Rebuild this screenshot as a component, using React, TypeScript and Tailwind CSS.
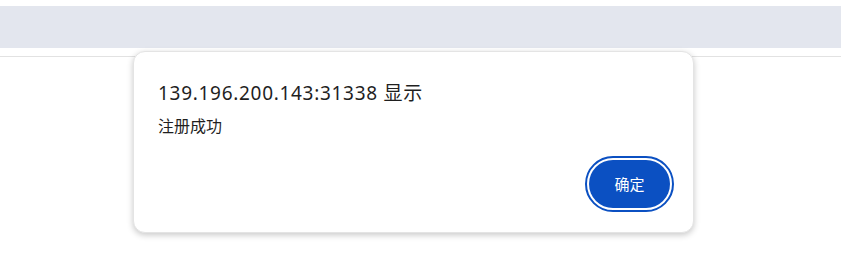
import React from "react";

export default function App() {
  return (
    <div className="relative h-[266px] w-full bg-white font-['Noto_Sans','Noto_Sans_CJK_SC',sans-serif]">
      <div className="h-[6px]" />
      <div className="h-[42px] bg-[#e3e6ee]" />
      <div className="h-[8px]" />
      <div className="h-px bg-[#e2e2e2]" />

      <div className="absolute left-[133px] top-[51px] flex h-[182px] w-[561px] flex-col rounded-[12px] border border-[#e4e4e4] bg-white pl-[24px] pr-[23px] pt-[27px] shadow-[0_2px_6px_rgba(0,0,0,0.22)]">
        <h1 className="text-[19px] leading-[28px] tracking-[0.7px] text-[#1f1f1f]">139.196.200.143:31338 显示</h1>
        <p className="mt-[8px] text-[16px] leading-[22px] text-[#1f1f1f]">注册成功</p>
        <div className="mt-auto mb-[24px] flex justify-end">
          <button className="h-[48px] w-[81px] rounded-full bg-[#0b50c2] text-[15px] text-white outline-2 outline-offset-2 outline-[#0b50c2]">
            确定
          </button>
        </div>
      </div>
    </div>
  );
}
